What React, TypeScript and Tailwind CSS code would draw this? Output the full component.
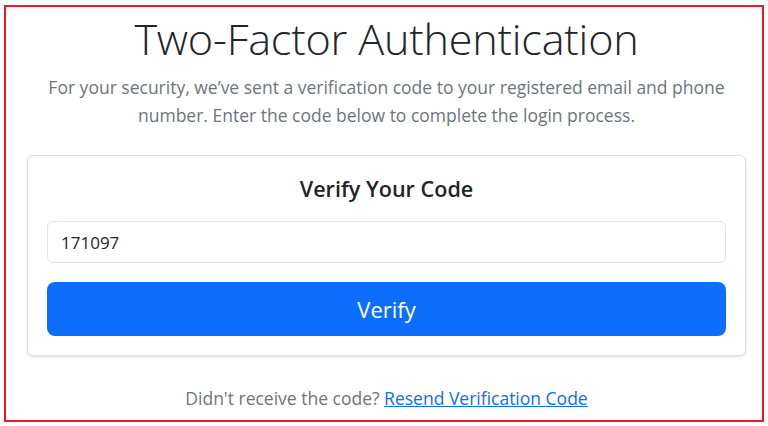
const font = { fontFamily: '"Open Sans", "Noto Sans", sans-serif' };

export default function App() {
  return (
    <div className="w-[768px] h-[426px] bg-white pt-[5px] pl-[4px]" style={font}>
      <div className="w-[760px] h-[417px] border-2 border-[#ec1c24] pl-[21px] pr-[16px] flex flex-col items-center">
        <h1 className="mt-[4px] text-[43.2px] leading-[56px] font-light text-[#212529] tracking-[-0.2px]">
          Two-Factor Authentication
        </h1>
        <p className="mt-[6px] text-center text-[17.5px] leading-[28px] text-[#6c757d] px-[10px]">
          For your security, we’ve sent a verification code to your registered email and phone number. Enter the code
          below to complete the login process.
        </p>

        <div className="mt-[26px] w-full rounded-[6px] border border-[#dee2e6] shadow-[0_1px_3px_rgba(0,0,0,0.12)] bg-white px-[19px] pt-[19px] pb-[19px]">
          <h5 className="text-center text-[21.6px] leading-[28px] font-semibold text-[#212529]">Verify Your Code</h5>
          <input
            className="mt-[18px] w-full h-[42px] rounded-[6px] border border-[#e1e4e8] px-[13px] text-[17px] text-[#212529] outline-none"
            defaultValue="171097"
            style={font}
          />
          <button className="mt-[19px] w-full h-[54px] rounded-[8px] bg-[#0d6efd] text-white text-[22px]" style={font}>
            Verify
          </button>
        </div>

        <p className="mt-[30px] text-[17.5px] leading-[24px] text-[#6c757d]">
          Didn't receive the code?{" "}
          <a href="#" className="text-[#0d6efd] underline">
            Resend Verification Code
          </a>
        </p>
      </div>
    </div>
  );
}
